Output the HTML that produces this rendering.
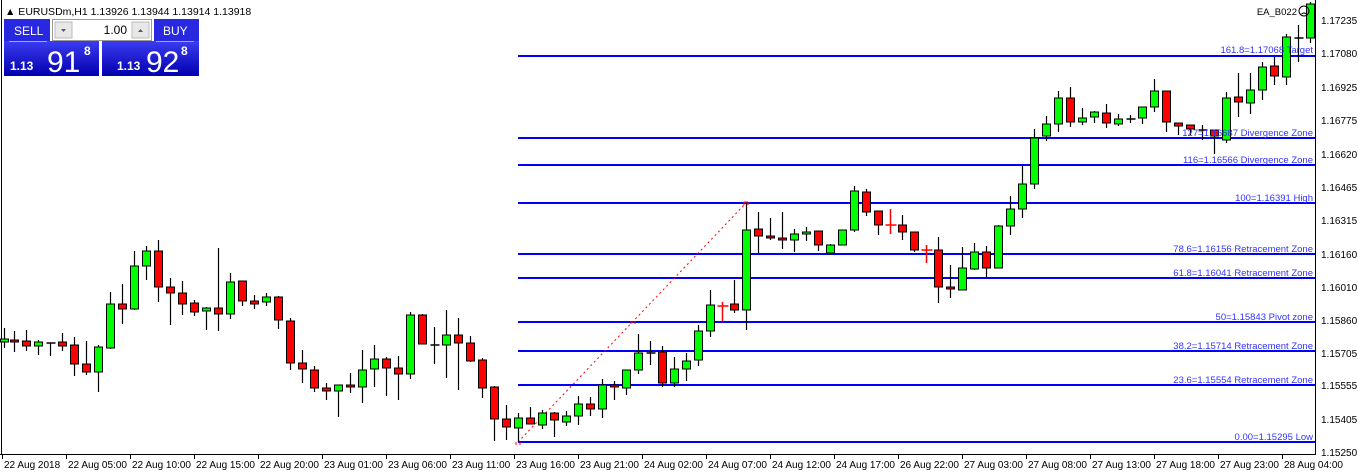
<!DOCTYPE html>
<html><head><meta charset="utf-8">
<style>
html,body{margin:0;padding:0;background:#fff;width:1358px;height:474px;overflow:hidden;font-family:"Liberation Sans",sans-serif;}
</style></head><body>
<svg id="s" width="1358" height="474" style="position:absolute;left:0;top:0" font-family="Liberation Sans, sans-serif">
<rect x="0" y="0" width="1358" height="474" fill="#fff"/>
<line x1="1.5" y1="0" x2="1.5" y2="454" stroke="#000"/>
<line x1="0" y1="454.5" x2="1316" y2="454.5" stroke="#000"/>
<line x1="1315.5" y1="0" x2="1315.5" y2="455" stroke="#000"/>
<g id="fib" stroke="#0000ff" stroke-width="2">
<line x1="518" y1="56" x2="1315" y2="56"/>
<line x1="518" y1="138" x2="1315" y2="138"/>
<line x1="518" y1="165" x2="1315" y2="165"/>
<line x1="518" y1="203" x2="1315" y2="203"/>
<line x1="518" y1="254" x2="1315" y2="254"/>
<line x1="518" y1="278" x2="1315" y2="278"/>
<line x1="518" y1="322" x2="1315" y2="322"/>
<line x1="518" y1="351" x2="1315" y2="351"/>
<line x1="518" y1="385" x2="1315" y2="385"/>
<line x1="518" y1="442" x2="1315" y2="442"/>
</g>
<line x1="518" y1="442" x2="746" y2="203" stroke="#ff0000" stroke-dasharray="2,3"/>
<path d="M516 445v-3M520 445v-3M631 324v-3M635 324v-3M744 205v-3M748 205v-3M744 202h4" stroke="#f00"/>
<g id="c"></g>
<g fill="#3333ff" font-size="9.5" text-anchor="end">
<text x="1313" y="53">161.8=1.17068 Target</text>
<text x="1313" y="136">127=1.16687 Divergence Zone</text>
<text x="1313" y="163">116=1.16566 Divergence Zone</text>
<text x="1313" y="201">100=1.16391 High</text>
<text x="1313" y="252">78.6=1.16156 Retracement Zone</text>
<text x="1313" y="276">61.8=1.16041  Retracement Zone</text>
<text x="1313" y="320">50=1.15843  Pivot zone</text>
<text x="1313" y="349">38.2=1.15714 Retracement Zone</text>
<text x="1313" y="383">23.6=1.15554 Retracement Zone</text>
<text x="1313" y="440">0.00=1.15295 Low</text>
</g>
<g font-size="10" fill="#000">
<text x="1321" y="24">1.17235</text><text x="1321" y="57">1.17080</text><text x="1321" y="91">1.16925</text>
<text x="1321" y="124">1.16775</text><text x="1321" y="158">1.16620</text><text x="1321" y="191">1.16465</text>
<text x="1321" y="224">1.16315</text><text x="1321" y="258">1.16160</text><text x="1321" y="291">1.16010</text>
<text x="1321" y="324">1.15860</text><text x="1321" y="357">1.15705</text><text x="1321" y="389">1.15555</text>
<text x="1321" y="423">1.15405</text><text x="1321" y="456">1.15250</text>
</g>
<g id="ax" font-size="10" fill="#000"></g>
<text x="1297" y="15" font-size="9.5" fill="#000" text-anchor="end">EA_B022</text>
<circle cx="1304" cy="11" r="5" fill="none" stroke="#000"/>
<path d="M1302 9h0.1M1306 9h0.1M1301.5 14q2.5-2 5 0" stroke="#000" fill="none"/>
<text x="5" y="15" font-size="10.5" fill="#000">▲ EURUSDm,H1  1.13926 1.13944 1.13914 1.13918</text>
<defs><linearGradient id="bg" x1="0" y1="0" x2="0" y2="1"><stop offset="0" stop-color="#3c3cf0"/><stop offset="1" stop-color="#0000b0"/></linearGradient></defs>
<rect x="4" y="19" width="46" height="23" fill="#2828e0"/>
<rect x="4" y="41" width="95" height="35" fill="url(#bg)"/>
<line x1="9" y1="41.5" x2="47" y2="41.5" stroke="#aab"/>
<text x="14" y="35" font-size="12" fill="#fff">SELL</text>
<text x="10" y="70" font-size="12" fill="#fff" font-weight="bold">1.13</text>
<text x="47" y="72" font-size="30" fill="#fff">91</text>
<text x="84" y="55" font-size="12" fill="#fff" font-weight="bold">8</text>
<rect x="154" y="19" width="45" height="23" fill="#2828e0"/>
<rect x="102" y="41" width="97" height="35" fill="url(#bg)"/>
<line x1="156" y1="41.5" x2="194" y2="41.5" stroke="#aab"/>
<text x="163" y="35" font-size="12" fill="#fff">BUY</text>
<text x="117" y="70" font-size="12" fill="#fff" font-weight="bold">1.13</text>
<text x="146" y="72" font-size="30" fill="#fff">92</text>
<text x="181" y="55" font-size="12" fill="#fff" font-weight="bold">8</text>
<rect x="52.5" y="19.5" width="99" height="21" fill="#fff" stroke="#999"/>
<rect x="55" y="22" width="17" height="16" fill="#e8e8e8" stroke="#bbb"/>
<rect x="132" y="22" width="17" height="16" fill="#e8e8e8" stroke="#bbb"/>
<path d="M61 29h5l-2.5 3z" fill="#557"/>
<path d="M138 32h5l-2.5-3z" fill="#557"/>
<text x="127" y="34" font-size="12" fill="#000" text-anchor="end">1.00</text>
</svg>
<script>
var D=[[4,'g',339,342,328,348],[14,'r',340,342,331,352],[26,'r',341,346,330,351],[38,'g',342,346,340,355],[50,'d',343,343,343,356],[62,'r',342,346,333,351],[74,'r',345,364,337,376],[86,'r',364,372,341,375],[98,'g',347,372,345,392],[110,'g',304,348,292,349],[122,'r',304,309,284,324],[134,'g',266,309,251,310],[146,'g',251,266,246,280],[158,'r',251,287,240,302],[170,'r',287,293,278,325],[182,'r',293,304,281,315],[194,'r',303,312,300,316],[206,'g',308,311,307,330],[218,'r',308,314,248,331],[230,'g',282,314,273,319],[242,'r',281,301,281,306],[254,'r',301,304,295,309],[266,'g',297,302,293,306],[278,'r',297,320,296,329],[290,'r',321,363,318,370],[302,'r',363,369,350,383],[314,'r',370,388,366,392],[326,'r',388,391,383,400],[338,'g',385,391,385,417],[350,'r',385,387,373,393],[362,'g',370,387,350,403],[374,'g',359,369,345,387],[386,'r',359,368,357,396],[398,'r',368,374,356,400],[410,'g',315,374,312,379],[422,'r',315,344,314,344],[434,'d',345,345,327,364],[446,'g',335,345,310,378],[458,'r',335,343,318,390],[470,'r',343,361,336,362],[482,'r',360,388,358,398],[494,'r',387,419,386,441],[506,'r',419,427,405,440],[518,'g',418,428,413,442],[530,'r',418,424,407,424],[542,'g',413,425,410,429],[554,'r',413,420,412,437],[566,'g',416,422,411,426],[578,'g',404,416,396,425],[590,'r',404,409,397,416],[602,'g',385,409,379,418],[614,'r',385,387,381,400],[626,'g',370,388,370,395],[638,'g',353,370,334,374],[650,'d',353,353,341,365],[662,'r',352,383,346,387],[674,'g',369,383,357,387],[686,'g',361,369,353,381],[698,'g',331,360,325,366],[710,'g',305,331,290,337],[722,'x',306,306,302,321],[734,'r',304,310,280,313],[746,'g',230,310,203,330],[758,'r',229,236,212,253],[770,'r',236,238,218,240],[782,'r',238,240,212,249],[794,'g',234,240,229,252],[806,'g',232,234,227,241],[818,'r',231,245,231,251],[830,'g',245,253,244,255],[842,'g',230,245,230,245],[854,'g',191,230,186,232],[866,'r',192,212,189,216],[878,'r',211,225,211,235],[890,'x',225,225,209,234],[902,'r',225,232,215,240],[914,'r',232,250,232,252],[926,'x',250,250,245,263],[938,'r',250,287,237,303],[950,'r',287,289,265,298],[962,'g',268,290,247,290],[974,'g',252,269,243,270],[986,'r',252,268,246,277],[998,'g',226,268,225,268],[1010,'g',209,226,196,235],[1022,'g',184,209,166,218],[1034,'g',138,184,129,189],[1046,'g',124,136,116,141],[1058,'g',98,124,91,132],[1070,'r',98,122,87,127],[1082,'g',118,122,108,125],[1094,'g',112,117,111,123],[1106,'r',113,123,104,128],[1118,'g',119,124,114,126],[1130,'d',119,119,115,123],[1142,'g',107,118,107,124],[1154,'g',91,107,79,112],[1166,'r',91,122,91,132],[1178,'r',123,126,123,135],[1190,'r',125,129,125,135],[1202,'d',130,130,125,140],[1214,'r',130,136,130,154],[1226,'g',98,140,92,143],[1238,'r',97,102,73,117],[1250,'g',90,103,73,114],[1262,'g',67,90,62,100],[1274,'r',66,76,57,85],[1286,'g',37,77,34,85],[1298,'d',38,38,25,62],[1310,'g',4,38,2,43]];
var h='';
D.forEach(function(c){var x=c[0]+0.5,t=c[1];
if(t=='x'){h+='<path d="M'+x+' '+c[4]+'V'+c[5]+'M'+(x-5)+' '+c[2]+'H'+(x+6)+'" stroke="#f00" stroke-width="1.5"/>';return;}
h+='<line x1="'+x+'" y1="'+c[4]+'" x2="'+x+'" y2="'+c[5]+'" stroke="#000" stroke-width="1.2"/>';
if(t=='d'){h+='<line x1="'+(x-4)+'" y1="'+c[2]+'" x2="'+(x+5)+'" y2="'+c[2]+'" stroke="#000" stroke-width="1.5"/>';return;}
h+='<rect x="'+(x-4)+'" y="'+c[2]+'" width="8" height="'+Math.max(c[3]-c[2],2)+'" fill="'+(t=='g'?'#00ff00':'#ff0000')+'" stroke="#000" stroke-width="1"/>';});
document.getElementById('c').innerHTML=h;
var L=['22 Aug 2018','22 Aug 05:00','22 Aug 10:00','22 Aug 15:00','22 Aug 20:00','23 Aug 01:00','23 Aug 06:00','23 Aug 11:00','23 Aug 16:00','23 Aug 21:00','24 Aug 02:00','24 Aug 07:00','24 Aug 12:00','24 Aug 17:00','26 Aug 22:00','27 Aug 03:00','27 Aug 08:00','27 Aug 13:00','27 Aug 18:00','27 Aug 23:00','28 Aug 04:00'];
var a='';L.forEach(function(s,i){var x=2+i*64;a+='<line x1="'+(x+0.5)+'" y1="455" x2="'+(x+0.5)+'" y2="459" stroke="#000"/><text x="'+(x+2)+'" y="468">'+s+'</text>';});
document.getElementById('ax').innerHTML=a;
</script>
</body></html>
